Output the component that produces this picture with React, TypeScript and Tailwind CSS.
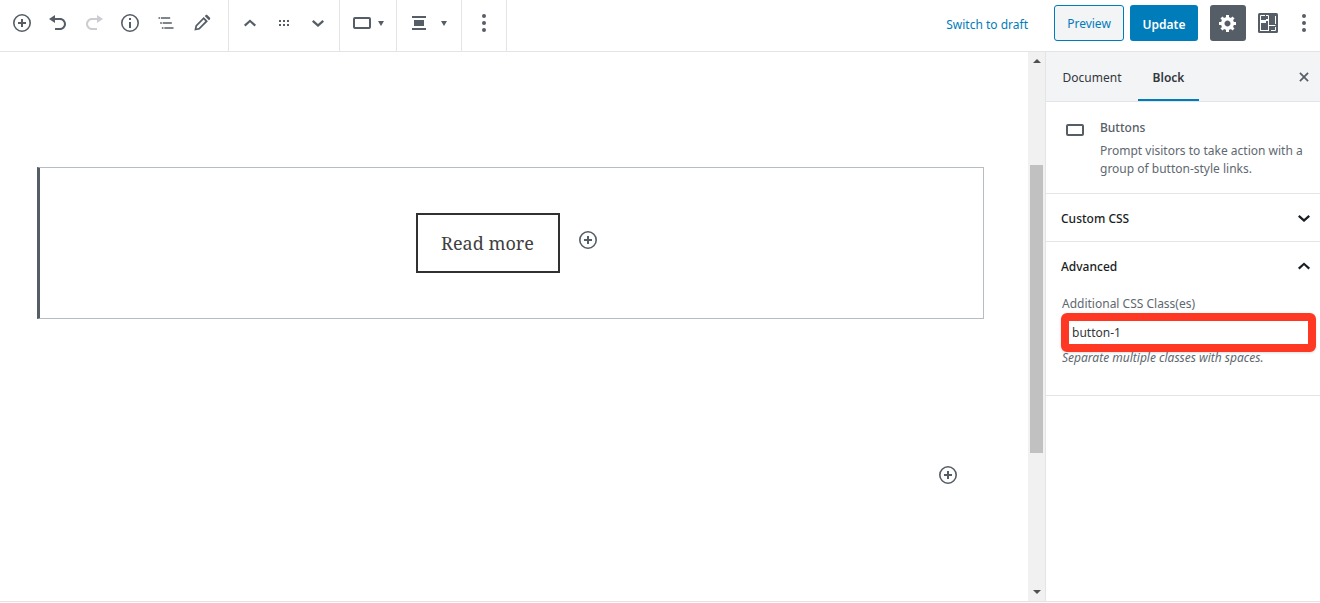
import React, { useState } from 'react';

interface IconProps {
  d: string;
  size?: string;
  viewBox?: string;
}

const Icon: React.FC<IconProps> = ({ d, size = 'size-5', viewBox = '0 0 20 20' }) => (
  <svg className={`${size} shrink-0 fill-current`} viewBox={viewBox} aria-hidden="true">
    <path fillRule="evenodd" d={d} />
  </svg>
);

const icons = {
  insert:
    'M10 1a9 9 0 1 0 0 18a9 9 0 0 0 0-18zm0 1.6a7.4 7.4 0 1 1 0 14.8a7.4 7.4 0 0 1 0-14.8zM9 6h2v3h3v2h-3v3H9v-3H6V9h3z',
  undo: 'M12 5H7V2L1 6l6 4V7h5c2.2 0 4 1.8 4 4s-1.8 4-4 4H7v2h5c3.3 0 6-2.7 6-6s-2.7-6-6-6z',
  redo: 'M8 5h5V2l6 4-6 4V7H8c-2.2 0-4 1.8-4 4s1.8 4 4 4h5v2H8c-3.3 0-6-2.7-6-6s2.7-6 6-6z',
  info: 'M10 1a9 9 0 1 0 0 18a9 9 0 0 0 0-18zm0 1.6a7.4 7.4 0 1 1 0 14.8a7.4 7.4 0 0 1 0-14.8zM9 5h2v2H9zM9 9h2v6H9z',
  navigation:
    'M5 5H3v2h2V5zm3 8h11v-2H8v2zm9-8H6v2h11V5zM7 11H5v2h2v-2zm0 8h2v-2H7v2zm3-2v2h11v-2H10z',
  edit: 'M2.4 17.6l1-5.2 8.3-8.3 4.2 4.2-8.3 8.3zM5 13.3l-.4 2.1 2.1-.4 6.6-6.7-1.7-1.7zM12.7 3.1l.9-.9c.6-.6 1.3-.6 1.9 0l2.3 2.3c.6.6.6 1.3 0 1.9l-.9.9z',
  up: 'M10 6.4l6 5.3-1.5 1.7L10 9.3l-4.5 4.1L4 11.7z',
  down: 'M10 14L4 8.7 5.5 7l4.5 4.1L14.5 7 16 8.7z',
  drag: 'M5 7h2v2H5zM9 7h2v2H9zM13 7h2v2h-2zM5 11h2v2H5zM9 11h2v2H9zM13 11h2v2h-2z',
  button: 'M3 4h14a2 2 0 0 1 2 2v8a2 2 0 0 1-2 2H3a2 2 0 0 1-2-2V6a2 2 0 0 1 2-2zm0 2v8h14V6z',
  caret: 'M0 0h6L3 5z',
  align: 'M3 3h14v2H3zM5 7h10v6H5zM3 15h14v2H3z',
  more: 'M10 1a2 2 0 1 1 0 4a2 2 0 0 1 0-4zM10 8a2 2 0 1 1 0 4a2 2 0 0 1 0-4zM10 15a2 2 0 1 1 0 4a2 2 0 0 1 0-4z',
  gear: 'M18 12h-2.18c-.17.7-.44 1.35-.81 1.93l1.54 1.54-2.1 2.1-1.54-1.54c-.58.36-1.23.63-1.91.79V19H8v-2.18c-.68-.16-1.33-.43-1.91-.79l-1.54 1.54-2.12-2.12 1.54-1.54c-.36-.58-.63-1.23-.79-1.91H1V9.03h2.17c.16-.7.44-1.35.8-1.94L2.43 5.55l2.1-2.1 1.54 1.54c.58-.37 1.24-.64 1.93-.81V2h3v2.18c.68.16 1.33.43 1.91.79l1.54-1.54 2.12 2.12-1.54 1.54c.36.59.64 1.24.8 1.94H18V12zm-8.5 1.5c1.66 0 3-1.34 3-3s-1.34-3-3-3-3 1.34-3 3 1.34 3 3 3z',
  close: 'M4.2 2.2L10 8l5.8-5.8 2 2L12 10l5.8 5.8-2 2L10 12l-5.8 5.8-2-2L8 10 2.2 4.2z',
};

const BlocksIcon: React.FC = () => (
  <svg className="size-5" viewBox="0 0 20 20" aria-hidden="true">
    <rect width="20" height="20" rx="1.5" fill="currentColor" />
    <path
      d="M2.5 18V2.5H7M8 2.5h2.5V12.5H17.5M17.5 3v8M17.5 14v3.5H13M2 17.5h9M10.5 12v5"
      fill="none"
      stroke="white"
    />
    <path d="M3 7h5v3H3zM8 6h3v2H8z" fill="white" />
  </svg>
);

const ToolButton: React.FC<{
  label: string;
  width?: string;
  disabled?: boolean;
  children: React.ReactNode;
}> = ({ label, width = 'w-9', disabled, children }) => (
  <button
    type="button"
    aria-label={label}
    disabled={disabled}
    className={`${width} flex h-9 shrink-0 items-center justify-center disabled:opacity-30`}
  >
    {children}
  </button>
);

const Header: React.FC = () => (
  <header className="flex shrink-0 justify-between border-b border-[#e2e4e7]">
    <div className="flex text-[#555d66]">
      <div className="flex h-[51px] items-start border-r border-[#e2e4e7] pt-[5px] pr-2 pl-1">
        <ToolButton label="Add block"><Icon d={icons.insert} /></ToolButton>
        <ToolButton label="Undo"><Icon d={icons.undo} /></ToolButton>
        <ToolButton label="Redo" disabled><Icon d={icons.redo} /></ToolButton>
        <ToolButton label="Content structure"><Icon d={icons.info} /></ToolButton>
        <ToolButton label="Block navigation"><Icon d={icons.navigation} viewBox="0 0 24 24" /></ToolButton>
        <ToolButton label="Edit"><Icon d={icons.edit} /></ToolButton>
      </div>
      <div className="flex h-[51px] items-start border-r border-[#e2e4e7] px-1 pt-[5px]">
        <ToolButton label="Move up" width="w-[34px]"><Icon d={icons.up} /></ToolButton>
        <ToolButton label="Drag" width="w-[34px]"><Icon d={icons.drag} /></ToolButton>
        <ToolButton label="Move down" width="w-[34px]"><Icon d={icons.down} /></ToolButton>
      </div>
      <div className="flex h-[51px] items-start border-r border-[#e2e4e7] pt-[5px]">
        <ToolButton label="Change block type" width="w-14">
          <span className="flex items-center gap-1.5">
            <Icon d={icons.button} />
            <Icon d={icons.caret} size="h-[5px] w-1.5" viewBox="0 0 6 5" />
          </span>
        </ToolButton>
      </div>
      <div className="flex h-[51px] items-start border-r border-[#e2e4e7] pt-[5px]">
        <ToolButton label="Change alignment" width="w-16">
          <span className="flex items-center gap-3 pr-0.5">
            <Icon d={icons.align} />
            <Icon d={icons.caret} size="h-[5px] w-1.5" viewBox="0 0 6 5" />
          </span>
        </ToolButton>
      </div>
      <div className="flex h-[51px] items-start border-r border-[#e2e4e7] px-1 pt-[5px]">
        <ToolButton label="More options"><Icon d={icons.more} /></ToolButton>
      </div>
    </div>

    <div className="flex items-start pt-[5px] text-[#555d66]">
      <button type="button" className="mr-[26px] h-9 pt-1 text-[#007cba]">Switch to draft</button>
      <button
        type="button"
        className="mr-1.5 h-9 w-[70px] rounded-[3px] border border-[#007cba] bg-[#f3f4f5] pt-0.5 text-[#007cba]"
      >
        Preview
      </button>
      <button type="button" className="mr-3 h-9 w-[68px] rounded-[3px] bg-[#007cba] pt-1 font-semibold text-white">
        Update
      </button>
      <button
        type="button"
        aria-label="Settings"
        className="flex size-9 items-center justify-center rounded-[3px] bg-[#555d66] text-white"
      >
        <Icon d={icons.gear} />
      </button>
      <div className="ml-1"><ToolButton label="Page builder"><BlocksIcon /></ToolButton></div>
      <div className="-mr-0.5"><ToolButton label="More tools"><Icon d={icons.more} /></ToolButton></div>
    </div>
  </header>
);

const Canvas: React.FC = () => (
  <main className="min-w-0 flex-1 pt-[115px] pr-11 pl-[37px]">
    <div className="flex h-[152px] items-center justify-center border border-l-[3px] border-[#b5bcc2] border-l-[#555d66]">
      <div className="flex items-center gap-[18px] pr-2.5">
        <a
          href="#read-more"
          className="flex h-[60px] w-36 items-center justify-center border-2 border-[#313131] font-['Noto_Serif','DejaVu_Serif',serif] text-[18px] text-[#404040]"
        >
          Read more
        </a>
        <button type="button" aria-label="Add button" className="mb-1.5 text-[#555d66]">
          <Icon d={icons.insert} />
        </button>
      </div>
    </div>
    <div className="mt-[146px] flex justify-end pr-[26px] text-[#555d66]">
      <button type="button" aria-label="Add block"><Icon d={icons.insert} /></button>
    </div>
  </main>
);

const Scrollbar: React.FC = () => (
  <div className="flex w-[17px] shrink-0 flex-col items-center bg-[#f1f1f1] py-[7px] text-[#505050]">
    <Icon d="M0 4h8L4 0z" size="h-1 w-2" viewBox="0 0 8 4" />
    <div className="mt-[102px] h-72 w-[13px] bg-[#c1c1c1]" />
    <div className="mt-auto">
      <Icon d="M0 0h8L4 4z" size="h-1 w-2" viewBox="0 0 8 4" />
    </div>
  </div>
);

const Sidebar: React.FC = () => {
  const [cssClass, setCssClass] = useState('button-1');

  return (
    <aside className="w-[275px] shrink-0 border-l border-[#e2e4e7] text-[#606870]">
      <div className="flex h-[50px] items-stretch border-b border-[#e2e4e7] bg-[#f3f4f5] text-[#32373c]">
        <button type="button" className="w-[92px] pt-0.5">Document</button>
        <button type="button" className="w-[61px] border-b-2 border-[#007cba] pt-1 font-semibold">Block</button>
        <button type="button" aria-label="Close settings" className="mr-2.5 ml-auto text-[#555d66]">
          <Icon d={icons.close} size="size-3" />
        </button>
      </div>

      <section className="flex h-[92px] gap-[15px] border-b border-[#e2e4e7] pt-[17px] pl-[19px]">
        <div className="pt-px text-[#555d66]"><Icon d={icons.button} /></div>
        <div className="leading-[18px]">
          <h2 className="mb-[5px] font-medium text-[#555d66]">Buttons</h2>
          <p>
            Prompt visitors to take action with a<br />group of button-style links.
          </p>
        </div>
      </section>

      <section className="border-b border-[#e2e4e7]">
        <button
          type="button"
          aria-expanded="false"
          className="flex h-[47px] w-full items-center justify-between pr-1.5 pl-[15px] font-medium text-[#191e23]"
        >
          <span className="pt-0.5">Custom CSS</span>
          <Icon d={icons.down} />
        </button>
      </section>

      <section className="h-[154px] border-b border-[#e2e4e7]">
        <button
          type="button"
          aria-expanded="true"
          className="flex h-12 w-full items-center justify-between pr-1.5 pl-[15px] font-medium text-[#191e23]"
        >
          <span className="pt-0.5">Advanced</span>
          <Icon d={icons.up} />
        </button>
        <div className="flex flex-col pr-1 pl-[15px]">
          <label htmlFor="css-class" className="mt-[5px] h-[18px] pl-px leading-[18px]">Additional CSS Class(es)</label>
          <input
            id="css-class"
            type="text"
            value={cssClass}
            onChange={(e) => setCssClass(e.target.value)}
            className="relative h-[39px] w-full rounded-md border-8 border-[#ff3824] bg-white px-[3px] text-[#32373c] shadow-sm"
          />
          <p className="-mt-[3px] pl-px leading-[18px] italic">Separate multiple classes with spaces.</p>
        </div>
      </section>
    </aside>
  );
};

export default function App() {
  return (
    <div className="flex h-screen flex-col bg-white font-['Noto_Sans',sans-serif] text-[12px]">
      <Header />
      <div className="flex min-h-0 flex-1">
        <Canvas />
        <Scrollbar />
        <Sidebar />
      </div>
      <div className="h-0.5 shrink-0 border-t border-[#e2e4e7]" />
    </div>
  );
}
